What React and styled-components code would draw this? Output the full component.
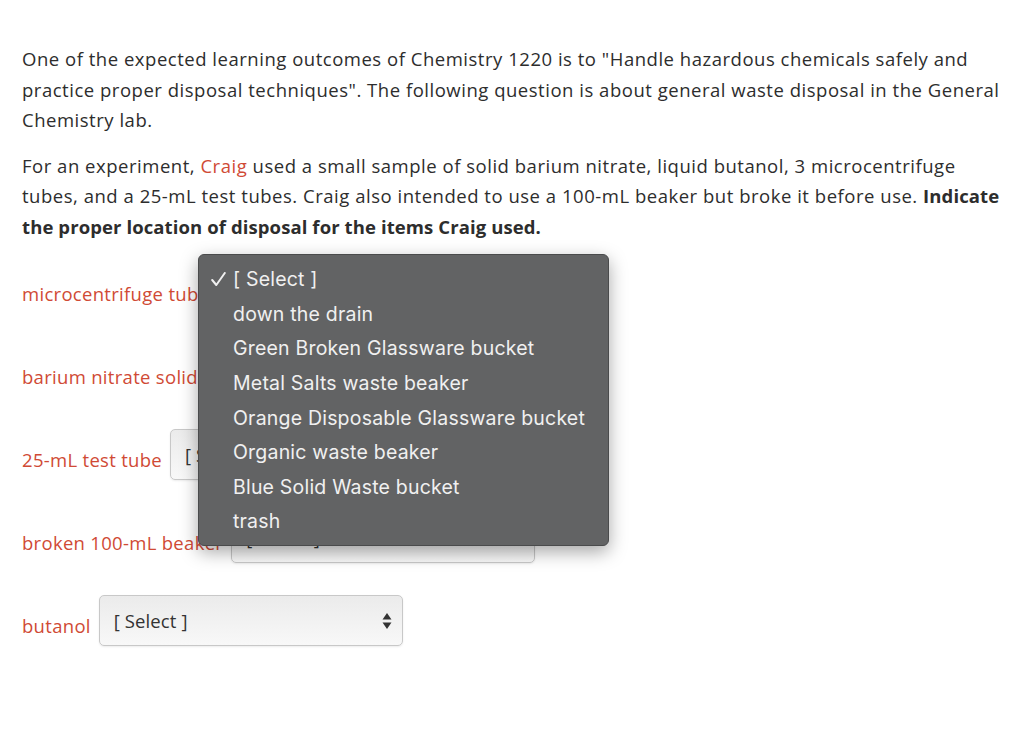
import React from 'react';
import styled, { createGlobalStyle } from 'styled-components';

const GlobalStyle = createGlobalStyle`
  body {
    margin: 0;
    background: #ffffff;
    font-family: "Open Sans", "Noto Sans", sans-serif;
    color: #2d2d2d;
  }
`;

const Page = styled.div`
  position: relative;
  padding: 44px 22px 40px 22px;
`;

const Para = styled.p`
  margin: 0 0 15px 0;
  font-size: 18.5px;
  letter-spacing: 0.52px;
  line-height: 30.5px;
  color: #2d2d2d;
  &:last-of-type {
    margin-bottom: 0;
  }
  b {
    letter-spacing: 0.1px;
  }
`;

const Name = styled.span`
  color: #d04a35;
`;

const Rows = styled.div`
  margin-top: 21px;
  display: flex;
  flex-direction: column;
  gap: 32px;
`;

const Row = styled.div`
  display: flex;
  align-items: center;
  gap: 8px;
  height: 51px;
`;

const Label = styled.span`
  font-size: 18.5px;
  letter-spacing: 0.3px;
  color: #d04a35;
  margin-top: 10px;
`;

const Select = styled.div`
  box-sizing: border-box;
  width: 304px;
  height: 51px;
  display: flex;
  align-items: center;
  justify-content: space-between;
  padding: 0 10px 0 14px;
  border: 1px solid #c8c8c8;
  border-radius: 5px;
  background: linear-gradient(#ebebeb, #f8f8f8);
  box-shadow: 0 1px 2px rgba(0, 0, 0, 0.08);
  font-size: 18.5px;
  letter-spacing: 0.1px;
  color: #333;
`;

const Popup = styled.div`
  position: absolute;
  left: 198px;
  top: 254px;
  width: 411px;
  box-sizing: border-box;
  padding: 7px 0 6px 0;
  background: #626364;
  border: 1px solid #4a4b4c;
  border-radius: 6px;
  box-shadow: 0 6px 18px rgba(0, 0, 0, 0.35);
  font-family: "Inter", "Roboto", sans-serif;
  font-size: 19.5px;
  letter-spacing: 0.2px;
  color: #f0f0f0;
`;

const Option = styled.div`
  display: flex;
  align-items: center;
  height: 34.6px;
  padding-left: 12px;
`;

const Check = styled.span`
  display: flex;
  width: 22px;
`;

const CheckMark = () => (
  <svg width="15" height="15" viewBox="0 0 15 15">
    <path d="M1.2 8 L5.3 13 L13.8 1" fill="none" stroke="#f0f0f0" strokeWidth="2" strokeLinecap="round" strokeLinejoin="round" />
  </svg>
);

const Arrows = () => (
  <svg width="10" height="18" viewBox="0 0 10 18">
    <path d="M5 1 L9.5 7.5 H0.5 Z" fill="#333" />
    <path d="M5 17 L9.5 10.5 H0.5 Z" fill="#333" />
  </svg>
);

const items = [
  'microcentrifuge tubes',
  'barium nitrate solid',
  '25-mL test tube',
  'broken 100-mL beaker',
  'butanol',
];

const options = [
  'down the drain',
  'Green Broken Glassware bucket',
  'Metal Salts waste beaker',
  'Orange Disposable Glassware bucket',
  'Organic waste beaker',
  'Blue Solid Waste bucket',
  'trash',
];

export default function App() {
  return (
    <Page>
      <GlobalStyle />
      <Para>
        One of the expected learning outcomes of Chemistry 1220 is to "Handle hazardous chemicals safely and
        practice proper disposal techniques". The following question is about general waste disposal in the
        General Chemistry lab.
      </Para>
      <Para>
        For an experiment, <Name>Craig</Name> used a small sample of solid barium nitrate, liquid butanol, 3
        microcentrifuge tubes, and a 25-mL test tubes. Craig also intended to use a 100-mL beaker but broke it
        before use. <b>Indicate the proper location of disposal for the items Craig used.</b>
      </Para>
      <Rows>
        {items.map((item) => (
          <Row key={item}>
            <Label>{item}</Label>
            <Select>
              <span>[ Select ]</span>
              <Arrows />
            </Select>
          </Row>
        ))}
      </Rows>
      <Popup>
        <Option>
          <Check>
            <CheckMark />
          </Check>
          [ Select ]
        </Option>
        {options.map((o) => (
          <Option key={o}>
            <Check />
            {o}
          </Option>
        ))}
      </Popup>
    </Page>
  );
}
